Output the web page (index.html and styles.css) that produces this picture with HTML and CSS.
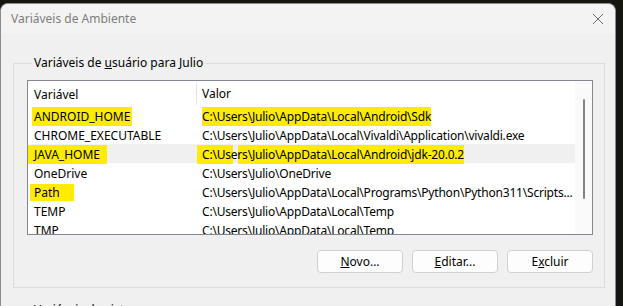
FILE: index.html
```html
<html>
  <head>
    <link rel="stylesheet" href="styles.css">
  </head>
  <body>
    <div class="window">
      <div class="titlebar">
        <span class="title">Variáveis de Ambiente</span>
        <svg class="close" width="12" height="12" viewBox="0 0 12 12">
          <path d="M1 1 L11 11 M11 1 L1 11" stroke="#6b6b6b" stroke-width="1" fill="none" />
        </svg>
      </div>
      <div class="content">
        <fieldset class="group">
          <legend>Variáveis de <u>u</u>suário para Julio</legend>
          <div class="list">
            <div class="list-body">
              <div class="row head">
                <div class="col-name">Variável</div>
                <div class="col-value">Valor</div>
              </div>
              <div class="row">
                <div class="col-name"><span class="mark m-android">ANDROID_HOME</span></div>
                <div class="col-value"><span class="mark m-sdk">C:\Users\Julio\AppData\Local\Android\Sdk</span></div>
              </div>
              <div class="row">
                <div class="col-name">CHROME_EXECUTABLE</div>
                <div class="col-value">C:\Users\Julio\AppData\Local\Vivaldi\Application\vivaldi.exe</div>
              </div>
              <div class="row hover">
                <div class="col-name"><span class="mark m-java">JAVA_HOME</span></div>
                <div class="col-value"><span class="mark m-jdk">C:\Users\Julio\AppData\Local\Android\jdk-20.0.2</span></div>
              </div>
              <div class="row">
                <div class="col-name">OneDrive</div>
                <div class="col-value">C:\Users\Julio\OneDrive</div>
              </div>
              <div class="row">
                <div class="col-name"><span class="mark m-path">Path</span></div>
                <div class="col-value">C:\Users\Julio\AppData\Local\Programs\Python\Python311\Scripts...</div>
              </div>
              <div class="row">
                <div class="col-name">TEMP</div>
                <div class="col-value">C:\Users\Julio\AppData\Local\Temp</div>
              </div>
              <div class="row">
                <div class="col-name">TMP</div>
                <div class="col-value">C:\Users\Julio\AppData\Local\Temp</div>
              </div>
            </div>
            <div class="scrollbar"><div class="thumb"></div></div>
          </div>
          <div class="buttons">
            <button><u>N</u>ovo...</button>
            <button><u>E</u>ditar...</button>
            <button>E<u>x</u>cluir</button>
          </div>
        </fieldset>
        <fieldset class="group">
          <legend>Variáveis do <u>s</u>istema</legend>
        </fieldset>
      </div>
    </div>
  </body>
</html>
```
FILE: styles.css
```css
body {
  margin: 0;
  background: #15150f;
  font-family: "Noto Sans", sans-serif;
  font-size: 12px;
  color: #000;
  overflow: hidden;
}

.window {
  margin-top: 3px;
  width: 614px;
  height: 303px;
  background: #f0f0f0;
  border: 1px solid #8c8c8c;
  border-bottom: none;
  border-radius: 8px 8px 0 0;
  overflow: hidden;
}

.titlebar {
  height: 30px;
  background: #f3f3f3;
  display: flex;
  align-items: center;
  justify-content: space-between;
  padding: 0 10px 0 10px;
}

.title {
  color: #7d7d7d;
  margin-top: -1px;
}

.close {
  margin-right: 1px;
}

.content {
  padding: 22px 10px 0 12px;
}

.group {
  min-width: 0;
  border: 1px solid #dcdcdc;
  margin: 0 0 15px 0;
  padding: 10px 11px 14px 13px;
}

.group legend {
  padding: 0 2px;
  margin-left: 5px;
  line-height: 14px;
}

.list {
  height: 153px;
  border: 1px solid #828790;
  background: #fff;
  display: flex;
  overflow: hidden;
}

.list-body {
  flex: 1;
  min-width: 0;
  padding-left: 4px;
  overflow: hidden;
}

.row {
  display: flex;
  height: 19px;
  align-items: center;
  padding-top: 1px;
  box-sizing: border-box;
}

.row.head {
  height: 25px;
  padding-top: 2px;
}

.row.head .col-value {
  border-left: 1px solid #e5e5e5;
  height: 23px;
  margin-top: -2px;
  display: flex;
  align-items: center;
  padding-left: 5px;
  letter-spacing: 0;
}

.row.hover {
  background: #f0f0f0;
}

.col-name {
  width: 162px;
  flex-shrink: 0;
  padding-left: 2px;
  white-space: nowrap;
}

.col-value {
  flex: 1;
  padding-left: 6px;
  white-space: nowrap;
  letter-spacing: -0.2px;
}

.mark {
  background: #ffec00;
}

.m-android {
  padding: 1px 2px;
  margin-left: -2px;
}

.m-sdk {
  padding: 1px 0;
}

.m-java {
  padding: 1px 7px 1px 11px;
  margin-left: -11px;
}

.m-jdk {
  margin-left: -5px;
  padding: 1px 0 1px 5px;
  background: linear-gradient(to right, #ffec00 0 36px, transparent 36px 41px, #ffec00 41px);
}

.m-path {
  padding: 0 14px 0 4px;
  margin-left: -4px;
}

.scrollbar {
  width: 17px;
  flex-shrink: 0;
  background: #fafafa;
}

.thumb {
  width: 2px;
  height: 100px;
  margin: 18px 0 0 8px;
  background: #858585;
  border-radius: 1px;
}

.buttons {
  display: flex;
  justify-content: flex-end;
  gap: 9px;
  margin-top: 15px;
}

button {
  width: 86px;
  height: 23px;
  background: #fdfdfd;
  border: 1px solid #d0d0d0;
  border-radius: 4px;
  font-family: "Noto Sans", sans-serif;
  font-size: 12px;
  color: #000;
  padding: 0;
}
```
